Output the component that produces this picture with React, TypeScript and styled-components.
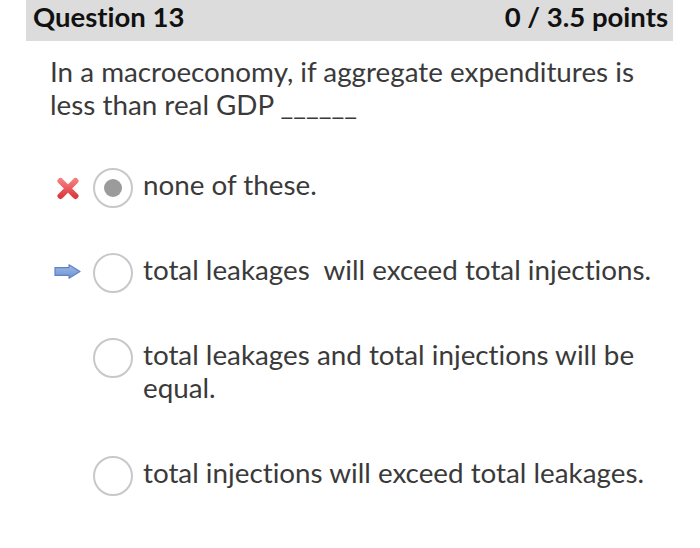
import styled, { createGlobalStyle } from "styled-components";

const Global = createGlobalStyle`
  body {
    margin: 0;
    background: #ffffff;
    font-family: Lato, "Open Sans", sans-serif;
    font-variant-ligatures: none;
  }
`;

const Page = styled.div`
  width: 700px;
  height: 548px;
  padding: 0 27px 0 26px;
  box-sizing: border-box;
`;

const Header = styled.div`
  display: flex;
  justify-content: space-between;
  align-items: flex-start;
  height: 41px;
  background: #dcdcdc;
  padding: 0 5px 0 7px;
  font-size: 27.5px;
  line-height: 33px;
  font-weight: 700;
  color: #111;
`;

const Prompt = styled.div`
  margin: 14px 0 0 24px;
  font-size: 27.8px;
  line-height: 33px;
  color: #3a3a3a;
  width: 600px;
`;

const Options = styled.div`
  display: flex;
  flex-direction: column;
  gap: 45px;
  margin-top: 47px;
`;

const Option = styled.div`
  display: flex;
  align-items: flex-start;
`;

const Marker = styled.div`
  width: 67px;
  height: 40px;
  display: flex;
  align-items: center;
  justify-content: flex-end;
  padding-right: 12px;
  box-sizing: border-box;
`;

const Radio = styled.div<{ $checked?: boolean }>`
  width: 40px;
  height: 40px;
  border-radius: 50%;
  border: 2px solid #c8c8c8;
  background: #fff;
  box-sizing: border-box;
  display: flex;
  align-items: center;
  justify-content: center;
  flex-shrink: 0;
  &::after {
    content: "";
    display: ${(p) => (p.$checked ? "block" : "none")};
    width: 18px;
    height: 18px;
    border-radius: 50%;
    background: #9b9b9b;
  }
`;

const Label = styled.div`
  margin-left: 10px;
  width: 515px;
  font-size: 27.8px;
  line-height: 33px;
  padding-bottom: 7px;
  color: #3a3a3a;
`;

const CrossIcon = () => (
  <svg width="24" height="23" viewBox="0 0 24 23" style={{ marginRight: 1 }}>
    <defs>
      <linearGradient id="xg" x1="0" y1="0" x2="0" y2="1">
        <stop offset="0" stopColor="#f47a7c" />
        <stop offset="1" stopColor="#de3b40" />
      </linearGradient>
    </defs>
    <path
      d="M4.5 4 L19.5 19 M19.5 4 L4.5 19"
      stroke="url(#xg)"
      strokeWidth="6"
      strokeLinecap="round"
    />
  </svg>
);

const ArrowIcon = () => (
  <svg width="27" height="15" viewBox="0 0 27 15" style={{ marginTop: -4 }}>
    <defs>
      <linearGradient id="ag" x1="0" y1="0" x2="0" y2="1">
        <stop offset="0" stopColor="#9fb9e8" />
        <stop offset="1" stopColor="#6f93d2" />
      </linearGradient>
    </defs>
    <path
      d="M1 3.6 H15 V0.8 L26 7.5 L15 14.2 V11.4 H1 Z"
      fill="url(#ag)"
      stroke="#5f82c4"
      strokeWidth="1.2"
      strokeLinejoin="round"
    />
  </svg>
);

const options = [
  { text: "none of these.", checked: true, mark: "cross" },
  { text: "total leakages\u00a0 will exceed total injections.", mark: "arrow" },
  { text: "total leakages and total injections will be equal." },
  { text: "total injections will exceed total leakages." },
];

export default function App() {
  return (
    <Page>
      <Global />
      <Header>
        <span>Question 13</span>
        <span>0 / 3.5 points</span>
      </Header>
      <Prompt>
        In a macroeconomy, if aggregate expenditures is less than real GDP ______
      </Prompt>
      <Options>
        {options.map((o, i) => (
          <Option key={i}>
            <Marker>
              {o.mark === "cross" && <CrossIcon />}
              {o.mark === "arrow" && <ArrowIcon />}
            </Marker>
            <Radio $checked={o.checked} />
            <Label>{o.text}</Label>
          </Option>
        ))}
      </Options>
    </Page>
  );
}
